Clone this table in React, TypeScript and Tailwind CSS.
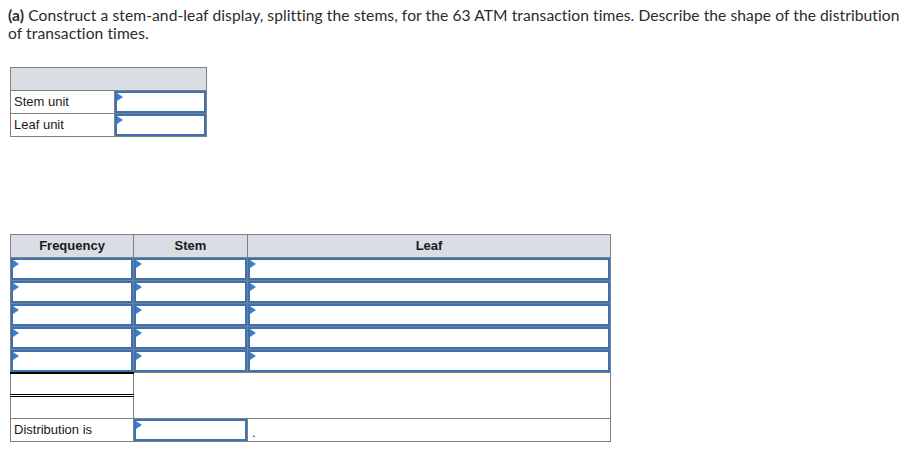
import React from 'react';

const BLUE = 'border-[#3a72b3]';

function Marker() {
  return (
    <span className="absolute left-0 top-0 w-0 h-0 border-t-[4px] border-b-[4px] border-l-[6px] border-t-transparent border-b-transparent border-l-[#3a7fcf]" />
  );
}

function InputBox({ className = '' }: { className?: string }) {
  return (
    <div className={`relative h-full w-full border-2 ${BLUE} bg-white ${className}`}>
      <Marker />
    </div>
  );
}

export default function App() {
  const rows = [0, 1, 2, 3, 4];
  return (
    <div className="w-[907px] h-[472px] bg-white text-[#2b2b2b] font-['Lato','Open_Sans',sans-serif]">
      <p className="pl-2 pt-[6px] text-[15.6px] leading-[18px] tracking-[0.08px]">
        <span className="whitespace-nowrap">
          <b>(a)</b> Construct a stem-and-leaf display, splitting the stems, for the 63 ATM transaction times. Describe the shape of the distribution
        </span>
        <br />
        of transaction times.
      </p>

      {/* units table */}
      <table className="ml-[10px] mt-[25px] border-collapse text-[13px] font-['Liberation_Sans',Arial,sans-serif] text-[#1a1a1a]">
        <tbody>
          <tr className="h-[23px]">
            <td colSpan={2} className="border border-[#808080] bg-[#d9dde4] w-[196px]" />
          </tr>
          <tr className="h-[23px]">
            <td className="border border-[#808080] w-[104px] px-[3px]">Stem unit</td>
            <td className="border border-[#808080] p-0 w-[92px] h-[23px]">
              <InputBox />
            </td>
          </tr>
          <tr className="h-[23px]">
            <td className="border border-[#808080] px-[3px]">Leaf unit</td>
            <td className="border border-[#808080] p-0 h-[23px]">
              <InputBox />
            </td>
          </tr>
        </tbody>
      </table>

      {/* stem-and-leaf table */}
      <table className="ml-[10px] mt-[97px] border-collapse text-[13px] font-['Liberation_Sans',Arial,sans-serif] text-[#1a1a1a]">
        <thead>
          <tr className="h-[23px] bg-[#d9dde4]">
            <th className="border border-[#808080] w-[123px] font-bold">Frequency</th>
            <th className="border border-[#808080] w-[114px] font-bold">Stem</th>
            <th className="border border-[#808080] w-[363px] font-bold">Leaf</th>
          </tr>
        </thead>
        <tbody>
          {rows.map((r) => (
            <tr key={r} className="h-[23px]">
              <td className="border border-[#808080] p-0 h-[23px]">
                <InputBox />
              </td>
              <td className="border border-[#808080] p-0 h-[23px]">
                <InputBox />
              </td>
              <td className="border border-[#808080] p-0 h-[23px]">
                <InputBox />
              </td>
            </tr>
          ))}
          <tr className="h-[23px]">
            <td className="border-x border-[#808080] border-t-2 border-t-black border-b-[3px] border-b-black border-double p-0 h-[23px]" />
            <td colSpan={2} rowSpan={2} className="border border-[#808080]" />
          </tr>
          <tr className="h-[23px]">
            <td className="border border-[#808080] p-0 h-[23px]" />
          </tr>
          <tr className="h-[23px]">
            <td className="border border-[#808080] px-[3px]">Distribution is</td>
            <td className="border border-[#808080] p-0 h-[23px]">
              <InputBox />
            </td>
            <td className="border border-[#808080] px-[4px] align-bottom leading-[16px]">.</td>
          </tr>
        </tbody>
      </table>
    </div>
  );
}
